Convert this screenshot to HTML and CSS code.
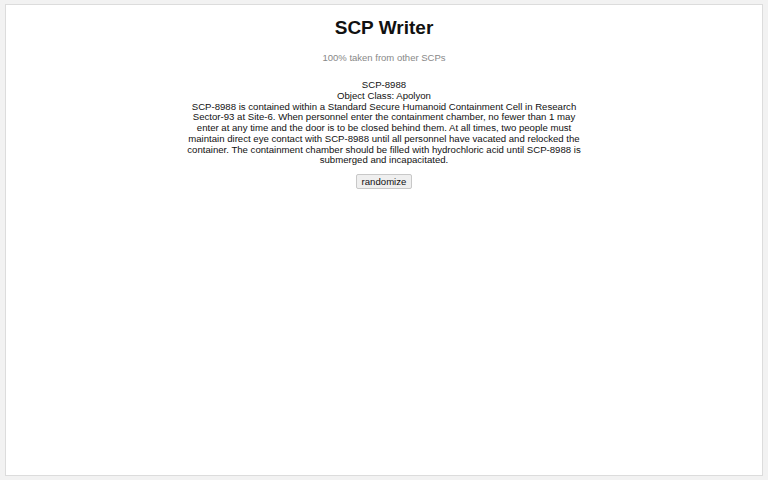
FILE: index.html
```html
<!DOCTYPE html>
<html lang="en">
<head>
    <meta charset="UTF-8">
    <title>SCP Writer</title>
    <link rel="stylesheet" href="styles.css">
</head>
<body>
    <div class="page">
        <h1>SCP Writer</h1>
        <p class="tagline">100% taken from other SCPs</p>

        <div class="entry">
            <div>SCP-8988</div>
            <div>Object Class: Apolyon</div>
            <div>SCP-8988 is contained within a Standard Secure Humanoid Containment Cell in Research Sector-93 at Site-6. When personnel enter the containment chamber, no fewer than 1 may enter at any time and the door is to be closed behind them. At all times, two people must maintain direct eye contact with SCP-8988 until all personnel have vacated and relocked the container. The containment chamber should be filled with hydrochloric acid until SCP-8988 is submerged and incapacitated.</div>
        </div>

        <button class="randomize">randomize</button>
    </div>
</body>
</html>
```
FILE: styles.css
```css
body {
    font-family: "Liberation Sans", Arial, sans-serif;
    background-color: #f2f2f2;
    margin: 0;
    padding: 4px 5px;
}

.page {
    height: 472px;
    background: white;
    border: 1px solid #dcdcdc;
    text-align: center;
    box-sizing: border-box;
    padding-top: 11px;
}

h1 {
    font-size: 19px;
    margin: 0;
    line-height: 24px;
    color: #111;
}

.tagline {
    font-size: 9.5px;
    color: #888;
    margin: 12px 0 17px;
}

.entry {
    width: 398px;
    margin: 0 auto;
    font-size: 9.6px;
    line-height: 10.75px;
    color: #111;
}

.randomize {
    margin-top: 8px;
    font-family: "Liberation Sans", Arial, sans-serif;
    font-size: 9.6px;
    padding: 1px 5px;
    background: #efefef;
    border: 1px solid #c8c8c8;
    border-radius: 2px;
    color: #111;
}
```
